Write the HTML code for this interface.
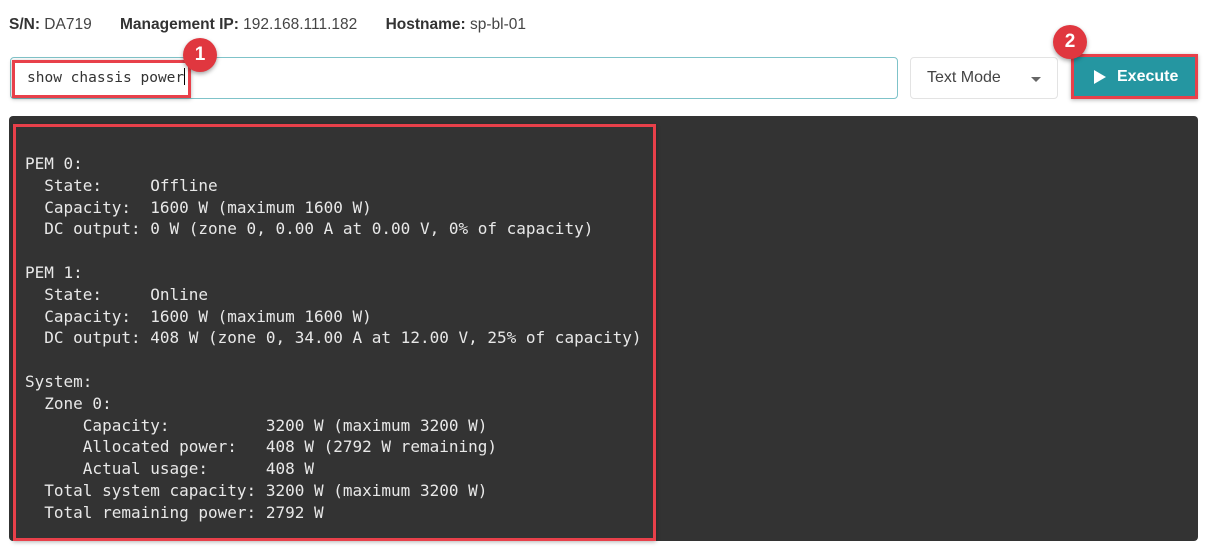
<!DOCTYPE html>
<html><head><style>
body{margin:0;width:1210px;height:548px;background:#fff;position:relative;font-family:"Liberation Sans",sans-serif;overflow:hidden}
.hdr{position:absolute;top:16px;left:9px;font-size:15.5px;color:#444;white-space:nowrap}
.hdr b{color:#333}
.hdr span{margin-right:24px}
.inp{position:absolute;left:10px;top:57px;width:888px;height:42px;border:1px solid #7fc3c9;border-radius:4px;box-sizing:border-box}
.sel{position:absolute;left:910px;top:57px;width:148px;height:42px;border:1px solid #e3e3e3;border-radius:4px;box-sizing:border-box;font-size:16px;color:#444;padding:11px 0 0 16px}
.sel:after{content:"";position:absolute;right:16px;top:19px;border:5px solid transparent;border-top:5px solid #666;border-bottom:0}
.btn{position:absolute;left:1073px;top:57px;width:124px;height:41px;background:#2596a1;color:#fff;font-weight:bold;font-size:16px;box-sizing:border-box;padding:11px 0 0 44px}
.btn svg{position:absolute;left:20px;top:12px}
.redb{position:absolute;border:3px solid #e8404a;box-sizing:border-box;box-shadow:0 1px 4px rgba(0,0,0,.3)}
.panel{position:absolute;left:9px;top:116px;width:1189px;height:425px;background:#333;border-radius:4px}
pre{position:absolute;left:25px;top:153px;margin:0;font-family:"DejaVu Sans Mono",monospace;font-size:16px;line-height:21.8px;color:#e8e8e8}
.badge{position:absolute;width:34px;height:34px;border-radius:50%;background:#e0373f;color:#fff;font-weight:bold;font-size:19px;text-align:center;line-height:34px;box-shadow:0 2px 4px rgba(0,0,0,.35)}
.cmd{position:absolute;left:27px;top:68px;font-family:"DejaVu Sans Mono",monospace;font-size:14.5px;color:#333}
</style></head><body>
<div class="hdr"><span><b>S/N:</b> DA719</span> <span><b>Management IP:</b> 192.168.111.182</span> <span><b>Hostname:</b> sp-bl-01</span></div>
<div class="inp"></div>
<div class="cmd">show chassis power<span style="display:inline-block;width:1px;height:17px;background:#000;vertical-align:-3px"></span></div>
<div class="redb" style="left:12px;top:60px;width:179px;height:38px"></div>
<div class="sel">Text Mode</div>
<div class="btn"><svg width="14" height="16" viewBox="0 0 14 16"><path d="M1 1L13 8L1 15Z" fill="#fff"/></svg>Execute</div>
<div class="redb" style="left:1071px;top:54px;width:127px;height:45px"></div>
<div class="panel"></div>
<div class="redb" style="left:13px;top:124px;width:643px;height:417px"></div>
<pre>PEM 0:
  State:     Offline
  Capacity:  1600 W (maximum 1600 W)
  DC output: 0 W (zone 0, 0.00 A at 0.00 V, 0% of capacity)

PEM 1:
  State:     Online
  Capacity:  1600 W (maximum 1600 W)
  DC output: 408 W (zone 0, 34.00 A at 12.00 V, 25% of capacity)

System:
  Zone 0:
      Capacity:          3200 W (maximum 3200 W)
      Allocated power:   408 W (2792 W remaining)
      Actual usage:      408 W
  Total system capacity: 3200 W (maximum 3200 W)
  Total remaining power: 2792 W</pre>
<div class="badge" style="left:183px;top:38px">1</div>
<div class="badge" style="left:1053px;top:25px">2</div>
</body></html>
